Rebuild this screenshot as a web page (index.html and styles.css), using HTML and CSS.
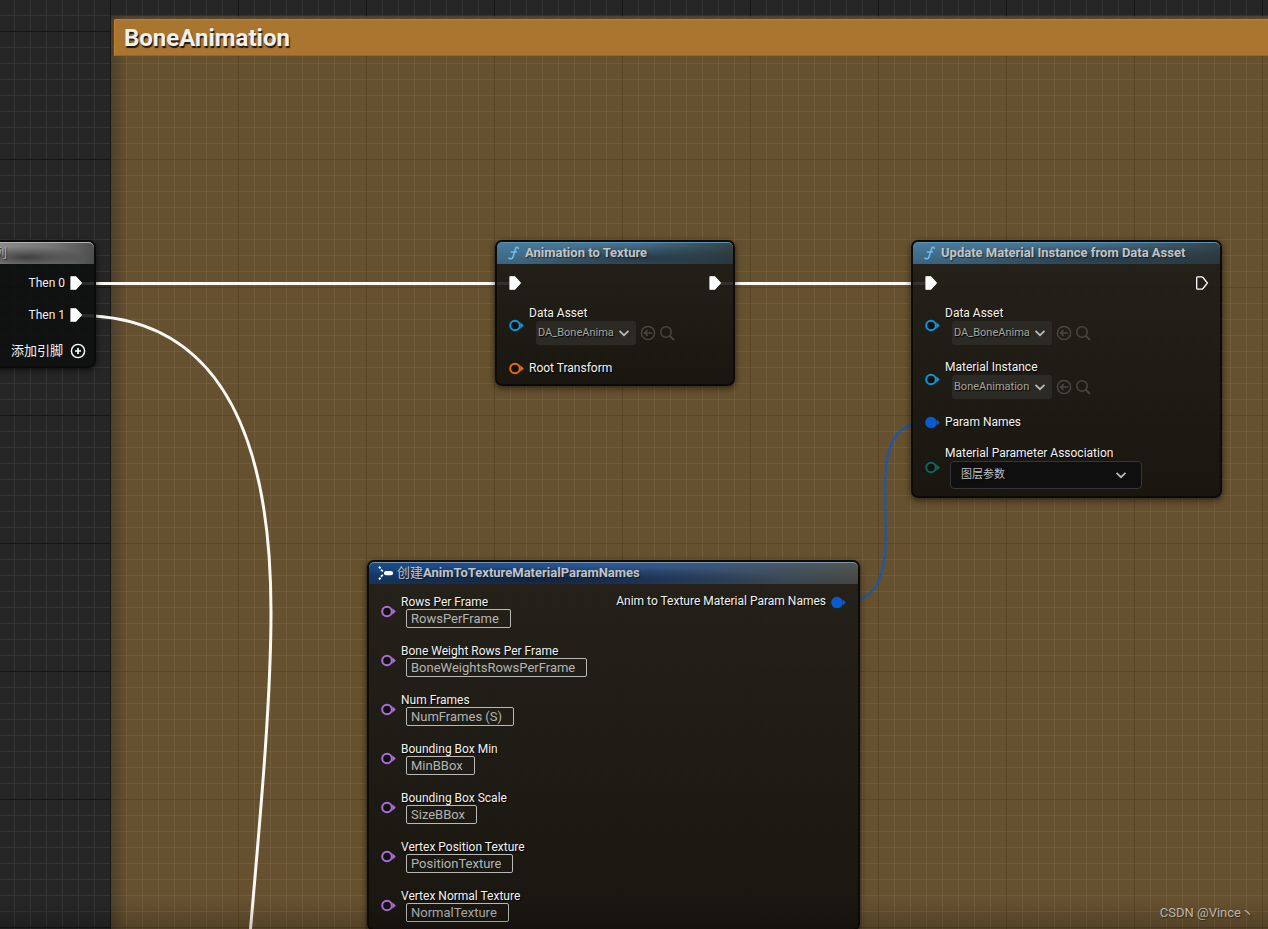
FILE: index.html
```html
<!DOCTYPE html>
<html lang="zh">
<head>
<meta charset="utf-8">
<meta name="viewport" content="width=device-width, initial-scale=1">
<title>BoneAnimation</title>
<link rel="stylesheet" href="styles.css">
</head>
<body>
<svg class="defs" aria-hidden="true">
  <symbol id="exec" viewBox="0 0 14 16"><path d="M2 1.8H6.8L12.3 8 6.8 14.2H2Z" fill="#fff" stroke="#fff" stroke-width="1.2" stroke-linejoin="round"/></symbol>
  <symbol id="exec-open" viewBox="0 0 14 16"><path d="M2.6 1.8H6.6Q7.4 1.8 8 2.5L12.4 8 8 13.5Q7.4 14.2 6.6 14.2H2.6Q1.7 14.2 1.7 13.2V2.8Q1.7 1.8 2.6 1.8Z" fill="none" stroke="#fff" stroke-width="1.3"/></symbol>
  <symbol id="pin" viewBox="0 0 16 14"><circle cx="7" cy="7.5" r="4.8" fill="#11110f" stroke="currentColor" stroke-width="2"/><path d="M12.4 4.3 15.8 7.5 12.4 10.7Z" fill="currentColor"/></symbol>
  <symbol id="pin-full" viewBox="0 0 16 14"><circle cx="7" cy="7.5" r="5.8" fill="currentColor"/><path d="M12.8 4.5 15.8 7.5 12.8 10.5Z" fill="currentColor"/></symbol>
  <symbol id="chevron" viewBox="0 0 12 12"><path d="M1.5 3.8 6 8.2 10.5 3.8" fill="none" stroke="currentColor" stroke-width="1.8"/></symbol>
  <symbol id="use" viewBox="0 0 16 16"><circle cx="8" cy="8" r="6.6" fill="none" stroke="currentColor" stroke-width="1.5"/><path d="M12 8H5M7.6 5 4.6 8 7.6 11" fill="none" stroke="currentColor" stroke-width="1.6"/></symbol>
  <symbol id="search" viewBox="0 0 16 16"><circle cx="7" cy="7" r="5.3" fill="none" stroke="currentColor" stroke-width="1.5"/><path d="M10.8 10.8 15 15" stroke="currentColor" stroke-width="1.8"/></symbol>
  <symbol id="func" viewBox="0 0 12 14"><path d="M10.4 2.4C9.8.8 8.1.8 7.4 2.9L5 11C4.4 13 2.4 13.4 1 12.1M3.2 6H8.6" fill="none" stroke="#6fbdf0" stroke-width="1.5" stroke-linecap="round"/></symbol>
  <symbol id="make" viewBox="0 0 16 14"><rect x="6" y="5" width="9" height="4.2" rx="2" fill="#fff"/><path d="M1 .8 2.6 2.4M1 13.4 2.6 11.8" fill="none" stroke="#fff" stroke-width="2"/><path d="M3 3.6 4.8 5.4M3 10.6 4.8 8.8" fill="none" stroke="#fff" stroke-width="1.8"/></symbol>
  <symbol id="plus" viewBox="0 0 16 16"><circle cx="8" cy="8" r="6.6" fill="none" stroke="#fff" stroke-width="1.4"/><path d="M8 5V11M5 8H11" stroke="#fff" stroke-width="1.7"/></symbol>
</svg>

<main class="graph">
  <section class="comment">
    <h1 class="comment-title">BoneAnimation</h1>
  </section>

  <svg class="wires" aria-hidden="true">
    <path class="wire" d="M80 283.500H510M718 283.500H926"/>
    <path class="wire" d="M80 315.500C200 316 271 405 271 612C271 705 259 830 250 935"/>
    <path class="wire wire-struct" d="M844 602C930 602 842 423 924 423"/>
  </svg>

  <article class="node node-sequence">
    <header class="node-head head-gray"><h2>序列</h2></header>
    <div class="node-body sequence-body">
      <div class="row out">Then 0<svg class="exec"><use href="#exec"/></svg></div>
      <div class="row out">Then 1<svg class="exec"><use href="#exec"/></svg></div>
      <button class="add-pin">添加引脚<svg class="icon"><use href="#plus"/></svg></button>
    </div>
  </article>

  <article class="node node-texture">
    <header class="node-head head-func"><svg class="func"><use href="#func"/></svg><h2>Animation to Texture</h2></header>
    <div class="node-body">
      <div class="row exec-row"><svg class="exec"><use href="#exec"/></svg><svg class="exec"><use href="#exec"/></svg></div>
      <div class="row"><svg class="pin object"><use href="#pin"/></svg>
        <div class="field"><label for="asset1">Data Asset</label>
          <div class="asset"><div class="combo"><select id="asset1"><option>DA_BoneAnima</option></select><svg class="chevron"><use href="#chevron"/></svg></div>
            <button class="tool" aria-label="Use selected asset"><svg class="icon"><use href="#use"/></svg></button><button class="tool" aria-label="Browse to asset"><svg class="icon"><use href="#search"/></svg></button></div></div></div>
      <div class="row"><svg class="pin transform"><use href="#pin"/></svg><span>Root Transform</span></div>
    </div>
  </article>

  <article class="node node-update">
    <header class="node-head head-func"><svg class="func"><use href="#func"/></svg><h2>Update Material Instance from Data Asset</h2></header>
    <div class="node-body">
      <div class="row exec-row"><svg class="exec"><use href="#exec"/></svg><svg class="exec"><use href="#exec-open"/></svg></div>
      <div class="row"><svg class="pin object"><use href="#pin"/></svg>
        <div class="field"><label for="asset2">Data Asset</label>
          <div class="asset"><div class="combo"><select id="asset2"><option>DA_BoneAnima</option></select><svg class="chevron"><use href="#chevron"/></svg></div>
            <button class="tool" aria-label="Use selected asset"><svg class="icon"><use href="#use"/></svg></button><button class="tool" aria-label="Browse to asset"><svg class="icon"><use href="#search"/></svg></button></div></div></div>
      <div class="row"><svg class="pin object"><use href="#pin"/></svg>
        <div class="field"><label for="material">Material Instance</label>
          <div class="asset"><div class="combo"><select id="material"><option>BoneAnimation</option></select><svg class="chevron"><use href="#chevron"/></svg></div>
            <button class="tool" aria-label="Use selected asset"><svg class="icon"><use href="#use"/></svg></button><button class="tool" aria-label="Browse to asset"><svg class="icon"><use href="#search"/></svg></button></div></div></div>
      <div class="row"><svg class="pin struct"><use href="#pin-full"/></svg><span>Param Names</span></div>
      <div class="row"><svg class="pin enum"><use href="#pin"/></svg>
        <div class="field"><label for="assoc">Material Parameter Association</label>
          <div class="combo combo-enum"><select id="assoc"><option>图层参数</option></select><svg class="chevron"><use href="#chevron"/></svg></div></div></div>
    </div>
  </article>

  <article class="node node-make">
    <header class="node-head head-make"><svg class="make"><use href="#make"/></svg><h2><span class="verb">创建</span>AnimToTextureMaterialParamNames</h2></header>
    <div class="node-body make-body">
      <div class="inputs">
        <div class="row"><svg class="pin name"><use href="#pin"/></svg><div class="field"><label for="p1">Rows Per Frame</label><input id="p1" value="RowsPerFrame"></div></div>
        <div class="row"><svg class="pin name"><use href="#pin"/></svg><div class="field"><label for="p2">Bone Weight Rows Per Frame</label><input id="p2" value="BoneWeightsRowsPerFrame"></div></div>
        <div class="row"><svg class="pin name"><use href="#pin"/></svg><div class="field"><label for="p3">Num Frames</label><input id="p3" value="NumFrames (S)"></div></div>
        <div class="row"><svg class="pin name"><use href="#pin"/></svg><div class="field"><label for="p4">Bounding Box Min</label><input id="p4" value="MinBBox"></div></div>
        <div class="row"><svg class="pin name"><use href="#pin"/></svg><div class="field"><label for="p5">Bounding Box Scale</label><input id="p5" value="SizeBBox"></div></div>
        <div class="row"><svg class="pin name"><use href="#pin"/></svg><div class="field"><label for="p6">Vertex Position Texture</label><input id="p6" value="PositionTexture"></div></div>
        <div class="row"><svg class="pin name"><use href="#pin"/></svg><div class="field"><label for="p7">Vertex Normal Texture</label><input id="p7" value="NormalTexture"></div></div>
      </div>
      <div class="output">Anim to Texture Material Param Names<svg class="pin struct"><use href="#pin-full"/></svg></div>
    </div>
  </article>

  <div class="watermark">CSDN @Vince丶</div>
</main>
</body>
</html>
```
FILE: styles.css
```css
* { box-sizing: border-box; }

body {
  margin: 0;
  font: 12px/16px Roboto, "Noto Sans CJK SC", sans-serif;
  color: #f2f2f2;
}

svg { display: block; flex: none; }
.defs { position: absolute; width: 0; height: 0; }

/* Canvas with a 16px minor and 128px major grid */
.graph {
  position: relative;
  height: 100vh;
  overflow: hidden;
  background-color: #262626;
  background-image:
    linear-gradient(90deg, #161616 1px, transparent 1px),
    linear-gradient(#161616 1px, transparent 1px),
    linear-gradient(90deg, #353535 1px, transparent 1px),
    linear-gradient(#353535 1px, transparent 1px);
  background-size: 128px 128px, 128px 128px, 16px 16px, 16px 16px;
  background-position: 110px 0, 0 31px, 14px 0, 0 15px;
}

.graph::after {
  content: "";
  position: absolute;
  inset: 0;
  background: linear-gradient(0deg, rgba(0, 0, 0, 0.18), transparent 28px);
  pointer-events: none;
}

.comment {
  position: absolute;
  inset: 16px 0 0 111px;
  padding: 3px 0 0 3px;
  background:
    linear-gradient(90deg, rgba(40, 40, 40, 0.4), transparent 16px),
    linear-gradient(rgba(40, 40, 40, 0.4), transparent 6px),
    rgba(250, 178, 70, 0.3);
}

.comment-title {
  margin: 0;
  padding: 2px 9px 0;
  border: 1px solid #c07f31;
  border-right: 0;
  border-bottom-color: #9c6227;
  border-radius: 2px 0 0 0;
  background: #aa752e;
  font-size: 24px;
  line-height: 33px;
  font-weight: 700;
  color: #f0f0f0;
  text-shadow: 1px 2px 1px #1b1712;
}

.wires { position: absolute; inset: 0; width: 100%; height: 100%; }
.wire { fill: none; stroke: #fbf8f4; stroke-width: 3; }
.wire-struct { stroke: #1459b4; stroke-width: 2; }

/* Nodes */
.node {
  position: absolute;
  border: 2px solid #0b0b09;
  border-radius: 7px;
  background: linear-gradient(rgba(28, 27, 23, 0.88), rgba(17, 16, 13, 0.9));
  box-shadow: 0 2px 6px rgba(0, 0, 0, 0.6);
}
.node-sequence { left: -60px; top: 240px; width: 156px; background: rgba(13, 16, 14, 0.88); }
.node-texture { left: 495px; top: 240px; width: 240px; }
.node-update { left: 911px; top: 240px; width: 311px; }
.node-make { left: 367px; top: 560px; width: 493px; }

.node-head {
  display: flex;
  align-items: center;
  height: 22px;
  padding-left: 11px;
  border-radius: 5px 5px 0 0;
}
.node-head h2 {
  margin: 0;
  font-size: 13px;
  line-height: 20px;
  font-weight: 700;
  color: #c2c4c5;
  text-shadow: 1px 1px 1px rgba(0, 0, 0, 0.5);
}
.verb { font-weight: 400; }
.head-func {
  box-shadow: inset 0 1px #5b95b8;
  background:
    radial-gradient(ellipse at 60% 75%, rgba(24, 36, 42, 0.6), transparent 60%),
    linear-gradient(rgba(20, 20, 20, 0), rgba(20, 20, 20, 0.25)),
    linear-gradient(90deg, #4a7d9e, #46718d 60%, #34444a);
}
.head-make {
  box-shadow: inset 0 1px #7c95b0;
  background:
    radial-gradient(ellipse at 35% 80%, rgba(12, 20, 38, 0.7), transparent 55%),
    linear-gradient(rgba(20, 20, 20, 0), rgba(20, 20, 20, 0.3)),
    linear-gradient(90deg, #184a8a, #2c5a98 50%, #545854);
}
.head-gray {
  box-shadow: inset 0 1px #b5b5b5;
  padding-left: 39px;
  background:
    radial-gradient(ellipse at 55% 70%, rgba(20, 20, 20, 0.6), transparent 50%),
    linear-gradient(100deg, #8e8e8e 30%, #777 70%, #4c4c4c);
}
.head-gray h2 { font-weight: 400; color: #aaa; }
.func { width: 12px; height: 14px; margin-right: 5px; }
.make { width: 16px; height: 14px; margin: 0 3px 0 -2px; }

.node-body {
  display: flex;
  flex-direction: column;
  gap: 14px;
  padding: 10px 11px 7px 11px;
}
.row { display: flex; align-items: center; gap: 5px; min-height: 18px; text-shadow: 1px 1px 1px #000; }
.exec-row { justify-content: space-between; min-height: 17px; }
.out { justify-content: flex-end; }
.exec { width: 14px; height: 16px; }
.pin { width: 16px; height: 14px; }
.icon { width: 16px; height: 16px; }
.object { color: #0e97d8; }
.transform { color: #ec6a10; }
.struct { color: #0a5bd0; }
.enum { color: #0c6a5c; }
.name { color: #ac6fd8; }

.sequence-body { padding-right: 11px; }
.sequence-body .row { gap: 4px; }
.add-pin {
  display: flex;
  align-items: center;
  align-self: flex-end;
  gap: 7px;
  margin: 5px -3px 0 0;
  padding: 0;
  border: 0;
  background: none;
  font: 13px/16px Roboto, "Noto Sans CJK SC", sans-serif;
  color: #f2f2f2;
}

.field { display: flex; flex-direction: column; align-items: flex-start; }
.asset { display: flex; align-items: center; margin-left: 7px; }
.combo { display: grid; width: 100px; height: 24px; margin-right: 4px; }
.combo select, .combo .chevron { grid-area: 1 / 1; }
.combo select {
  appearance: none;
  width: 100%;
  padding: 0 2px;
  border: 0;
  border-radius: 3px;
  background: #2c2a24;
  color: #a5a5a2;
  font: 11px/16px Roboto, "Noto Sans CJK SC", sans-serif;
  text-shadow: 1px 1px 1px #000;
}
.chevron {
  width: 12px;
  height: 12px;
  align-self: center;
  justify-self: end;
  margin-right: 6px;
  color: #b8b8b6;
  pointer-events: none;
}
.combo-enum { width: 192px; height: 28px; margin-left: 5px; }
.combo-enum select {
  padding: 0 10px;
  border: 1px solid #37373a;
  border-radius: 4px;
  background: #0f0f0f;
  color: #c0c0c0;
}
.combo-enum .chevron { margin-right: 15px; }
.tool { padding: 0; border: 0; background: none; color: #47463f; }
.tool + .tool { margin-left: 3px; }

.make-body { flex-direction: row; justify-content: space-between; padding-right: 12px; }
.inputs { display: flex; flex-direction: column; gap: 15px; }
.make-body label, .output { height: 15px; line-height: 17px; }
.inputs input {
  field-sizing: content;
  height: 19px;
  margin-left: 5px;
  padding: 0 11px 0 4px;
  border: 1px solid #b9b9b7;
  border-radius: 2px;
  background: transparent;
  color: #b4b4b2;
  font: 13px/16px Roboto, sans-serif;
}
.output { display: flex; align-items: center; align-self: flex-start; gap: 4px; text-shadow: 1px 1px 1px #000; }

.watermark {
  position: absolute;
  right: 14px;
  bottom: 7px;
  font: 13px/18px Roboto, "Noto Sans CJK SC", sans-serif;
  color: #c9c4bb;
  text-shadow: 1px 1px 1px #3a2c18;
}
```
